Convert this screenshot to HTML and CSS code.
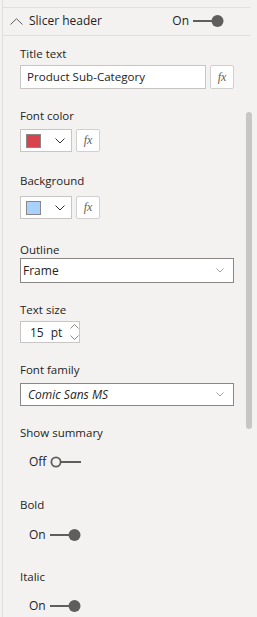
FILE: index.html
```html
<!DOCTYPE html>
<html>
<head>
<meta charset="utf-8">
<link rel="stylesheet" href="styles.css">
</head>
<body>
<div class="pane">
  <div class="header">
    <svg class="chev-up" width="13" height="7" viewBox="0 0 13 7"><polyline points="0.5,6.5 6.5,0.8 12.5,6.5" fill="none" stroke="#605e5c" stroke-width="1"/></svg>
    <span class="hdr-title">Slicer header</span>
    <div class="toggle hdr-toggle">
      <span class="tg-text">On</span>
      <svg width="31" height="12" viewBox="0 0 31 12"><line x1="0" y1="6" x2="24" y2="6" stroke="#605e5c" stroke-width="2"/><circle cx="24.5" cy="6" r="6" fill="#605e5c"/></svg>
    </div>
  </div>

  <div class="body">
    <div class="field f-title">
      <div class="label">Title text</div>
      <div class="row ctrl">
        <div class="textinput">Product Sub-Category</div>
        <div class="fx fx-lg"><span>fx</span></div>
      </div>
    </div>

    <div class="field f-fcolor">
      <div class="label">Font color</div>
      <div class="row ctrl">
        <div class="picker">
          <span class="swatch swatch-red"></span>
          <svg class="picker-chev" width="10" height="6" viewBox="0 0 10 6"><polyline points="0.5,0.5 5,5 9.5,0.5" fill="none" stroke="#323130" stroke-width="1"/></svg>
        </div>
        <div class="fx"><span>fx</span></div>
      </div>
    </div>

    <div class="field f-bg">
      <div class="label">Background</div>
      <div class="row ctrl">
        <div class="picker">
          <span class="swatch swatch-blue"></span>
          <svg class="picker-chev" width="10" height="6" viewBox="0 0 10 6"><polyline points="0.5,0.5 5,5 9.5,0.5" fill="none" stroke="#323130" stroke-width="1"/></svg>
        </div>
        <div class="fx"><span>fx</span></div>
      </div>
    </div>

    <div class="field f-outline">
      <div class="label">Outline</div>
      <div class="dropdown ctrl">
        <span class="dd-text">Frame</span>
        <svg class="dd-chev" width="8" height="5" viewBox="0 0 8 5"><polyline points="0.5,0.5 4,4 7.5,0.5" fill="none" stroke="#a19f9d" stroke-width="1"/></svg>
      </div>
    </div>

    <div class="field f-size">
      <div class="label">Text size</div>
      <div class="spinner ctrl">
        <span class="sp-num">15</span>
        <span class="sp-unit">pt</span>
        <div class="sp-arrows">
          <svg width="9" height="5" viewBox="0 0 9 5"><polyline points="0.5,4.5 4.5,0.5 8.5,4.5" fill="none" stroke="#8a8886" stroke-width="1"/></svg>
          <svg width="9" height="5" viewBox="0 0 9 5"><polyline points="0.5,0.5 4.5,4.5 8.5,0.5" fill="none" stroke="#8a8886" stroke-width="1"/></svg>
        </div>
      </div>
    </div>

    <div class="field f-family">
      <div class="label">Font family</div>
      <div class="dropdown dropdown-sm ctrl">
        <span class="dd-text dd-italic">Comic Sans MS</span>
        <svg class="dd-chev" width="8" height="5" viewBox="0 0 8 5"><polyline points="0.5,0.5 4,4 7.5,0.5" fill="none" stroke="#a19f9d" stroke-width="1"/></svg>
      </div>
    </div>

    <div class="field f-summary">
      <div class="label">Show summary</div>
      <div class="toggle body-toggle ctrl">
        <span class="tg-text">Off</span>
        <svg width="32" height="12" viewBox="0 0 32 12"><circle cx="6" cy="6" r="4.6" fill="none" stroke="#605e5c" stroke-width="1.8"/><line x1="10.5" y1="6" x2="31" y2="6" stroke="#605e5c" stroke-width="2"/></svg>
      </div>
    </div>

    <div class="field f-bold">
      <div class="label">Bold</div>
      <div class="toggle body-toggle ctrl">
        <span class="tg-text">On</span>
        <svg width="31" height="12" viewBox="0 0 31 12"><line x1="0" y1="6" x2="24" y2="6" stroke="#605e5c" stroke-width="2"/><circle cx="24.5" cy="6" r="6" fill="#605e5c"/></svg>
      </div>
    </div>

    <div class="field f-italic">
      <div class="label">Italic</div>
      <div class="toggle body-toggle ctrl">
        <span class="tg-text">On</span>
        <svg width="31" height="12" viewBox="0 0 31 12"><line x1="0" y1="6" x2="24" y2="6" stroke="#605e5c" stroke-width="2"/><circle cx="24.5" cy="6" r="6" fill="#605e5c"/></svg>
      </div>
    </div>
  </div>

  <div class="scrollbar"></div>
</div>
</body>
</html>
```

FILE: styles.css
```css
html, body {
  margin: 0;
  padding: 0;
  background: #f3f2f1;
}
body {
  font-family: "Segoe UI", "Open Sans", "Noto Sans", sans-serif;
  font-size: 11px;
  color: #252423;
  overflow: hidden;
}
.pane {
  position: relative;
  margin-left: 2px;
  border-left: 1px solid #e1dfdd;
  height: 617px;
  padding-top: 7px;
  box-sizing: border-box;
}
.header {
  width: 247px;
  height: 29px;
  box-sizing: border-box;
  border-top: 1px solid #e1dfdd;
  border-bottom: 1px solid #e1dfdd;
  display: flex;
  align-items: center;
  padding-left: 7px;
  padding-right: 26px;
}
.chev-up {
  display: block;
  margin-top: -1px;
}
.hdr-title {
  margin-left: 6px;
  font-size: 12px;
  line-height: 16px;
  margin-top: -2px;
}
.toggle {
  display: flex;
  align-items: center;
}
.toggle svg {
  display: block;
}
.tg-text {
  font-size: 12px;
  line-height: 14px;
  margin-right: 4px;
}
.hdr-toggle {
  margin-left: auto;
  margin-top: -2px;
}
.body {
  padding-left: 17px;
}
.label {
  font-size: 11.5px;
  line-height: 16px;
  height: 16px;
}
.row {
  display: flex;
  gap: 4px;
}
.textinput {
  width: 186px;
  height: 24px;
  box-sizing: border-box;
  background: #fff;
  border: 1px solid #c8c6c4;
  padding-left: 6px;
  font-size: 11.6px;
  line-height: 22px;
  white-space: nowrap;
}
.fx {
  width: 24px;
  height: 23px;
  box-sizing: border-box;
  background: #fff;
  border: 1px solid #d2d0ce;
  border-radius: 2px;
  display: flex;
  align-items: center;
  justify-content: center;
  font-family: "Liberation Serif", "DejaVu Serif", serif;
  font-style: italic;
  font-size: 12px;
  color: #605e5c;
}
.fx-lg {
  height: 24px;
}
.picker {
  width: 52px;
  height: 23px;
  box-sizing: border-box;
  background: #fff;
  border: 1px solid #c8c6c4;
  display: flex;
  align-items: center;
  padding-left: 5px;
}
.swatch {
  width: 15px;
  height: 14px;
  box-sizing: border-box;
  border: 1px solid #8a8886;
  display: block;
}
.swatch-red {
  background: #d9434e;
}
.swatch-blue {
  background: #a8d2fc;
}
.picker-chev {
  display: block;
  margin-left: 14px;
}
.dropdown {
  width: 214px;
  height: 25px;
  box-sizing: border-box;
  background: #fff;
  border: 1px solid #8a8886;
  display: flex;
  align-items: center;
  padding-left: 2px;
  padding-right: 9px;
}
.dropdown-sm {
  height: 23px;
}
.dd-text {
  font-size: 12px;
  line-height: 16px;
}
.dd-italic {
  font-style: italic;
  padding-left: 5px;
}
.dd-chev {
  display: block;
  margin-left: auto;
}
.spinner {
  width: 60px;
  height: 22px;
  box-sizing: border-box;
  background: #fff;
  border: 1px solid #c8c6c4;
  display: flex;
  align-items: center;
  padding-left: 9px;
  font-size: 12px;
}
.sp-unit {
  margin-left: 7px;
}
.sp-arrows {
  margin-left: 8px;
  display: flex;
  flex-direction: column;
  gap: 6px;
}
.sp-arrows svg {
  display: block;
}
.body-toggle {
  padding-left: 9px;
  height: 14px;
}
.f-title { margin-top: 10px; }
.f-title .ctrl { margin-top: 3px; }
.f-fcolor { margin-top: 19px; }
.f-fcolor .ctrl { margin-top: 5px; }
.f-bg { margin-top: 21px; }
.f-bg .ctrl { margin-top: 7px; }
.f-outline { margin-top: 23px; }
.f-outline .ctrl { margin-top: 0; }
.f-size { margin-top: 19px; }
.f-size .ctrl { margin-top: 3px; }
.f-family { margin-top: 19px; }
.f-family .ctrl { margin-top: 5px; }
.f-summary { margin-top: 19px; }
.f-summary .ctrl { margin-top: 14px; }
.f-bold { margin-top: 28px; }
.f-bold .ctrl { margin-top: 15px; }
.f-italic { margin-top: 27px; }
.f-italic .ctrl { margin-top: 14px; }
.scrollbar {
  position: absolute;
  left: 243px;
  top: 112px;
  width: 6px;
  height: 317px;
  background: #c8c6c4;
  border-radius: 3px;
}
```
